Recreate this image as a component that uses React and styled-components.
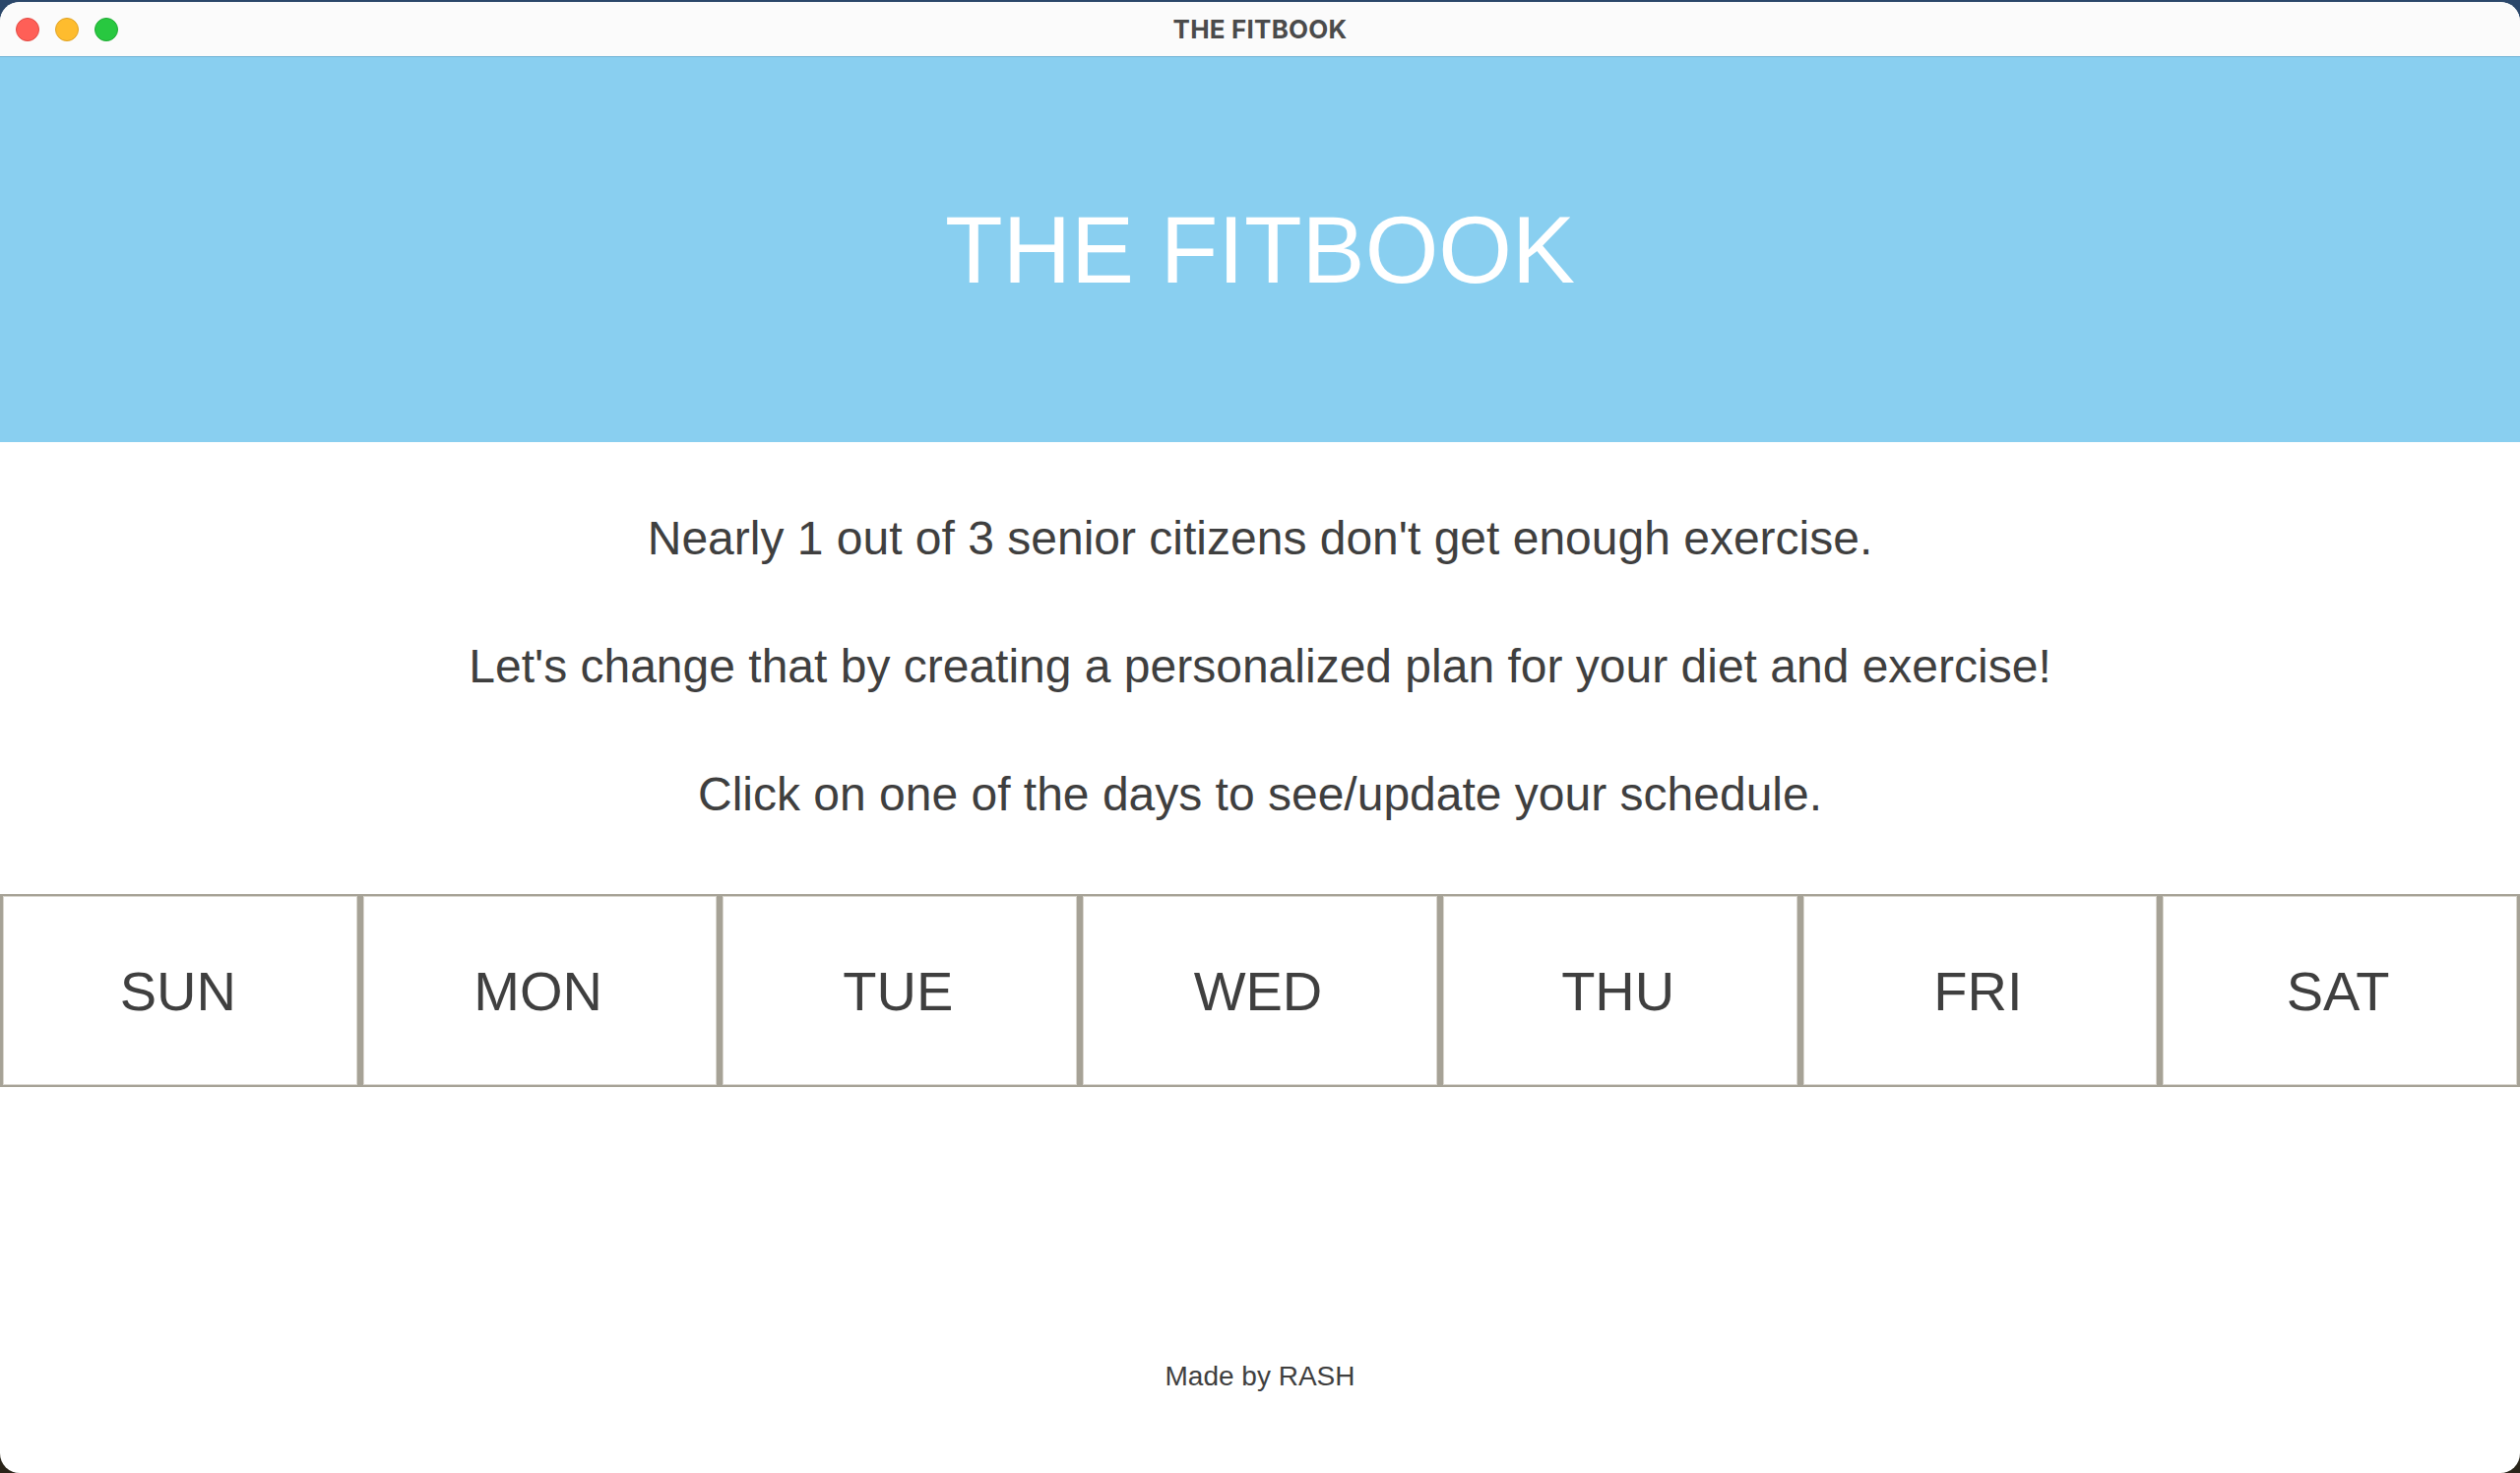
import React from "react";
import styled, { createGlobalStyle } from "styled-components";

const GlobalStyle = createGlobalStyle`
  html, body {
    margin: 0;
    padding: 0;
    height: 100%;
    background: linear-gradient(180deg, #2b476a 0%, #2b3a4c 50%, #2a2419 100%);
  }
  #root {
    height: 100%;
  }
  * {
    box-sizing: border-box;
  }
`;

const Window = styled.div`
  margin-top: 2px;
  height: calc(100vh - 2px);
  display: flex;
  flex-direction: column;
  background: #ffffff;
  border-radius: 20px;
  overflow: hidden;
  font-family: "Liberation Sans", Arial, Helvetica, sans-serif;
`;

const TitleBar = styled.div`
  height: 56px;
  flex: none;
  display: grid;
  grid-template-columns: 1fr auto 1fr;
  align-items: center;
  background: #fbfbfb;
  border-bottom: 1px solid #72b4d6;
`;

const Lights = styled.div`
  display: flex;
  gap: 16px;
  padding-left: 16px;
`;

const Light = styled.span`
  width: 24px;
  height: 24px;
  border-radius: 50%;
  background: ${(p) => p.$color};
  border: 1px solid ${(p) => p.$edge};
`;

const WindowTitle = styled.div`
  font-family: Inter, "Liberation Sans", sans-serif;
  font-weight: 700;
  font-size: 26px;
  color: #4b4b4b;
  letter-spacing: 0.2px;
`;

const Header = styled.header`
  height: 391px;
  flex: none;
  display: flex;
  align-items: center;
  justify-content: center;
  background: #89cff0;
`;

const Title = styled.h1`
  margin: 0;
  font-size: 96px;
  font-weight: 400;
  line-height: 1;
  color: #ffffff;
`;

const Intro = styled.section`
  padding-top: 33px;
  display: flex;
  flex-direction: column;
  align-items: center;
`;

const Line = styled.p`
  margin: 0;
  font-size: 48px;
  line-height: 130px;
  color: #3f3f3f;
  text-align: center;
`;

const Days = styled.nav`
  margin-top: 36px;
  display: grid;
  grid-template-columns: repeat(7, 1fr);
`;

const DayButton = styled.button`
  height: 196px;
  margin: 0;
  padding: 0 4px 0 0;
  background: #ffffff;
  border-style: solid;
  border-width: 2px 3px;
  border-color: #a6a296;
  box-shadow: inset 0 0 0 1px #dad7d0;
  font-family: "Liberation Sans", Arial, Helvetica, sans-serif;
  font-size: 56px;
  color: #3f3f3f;
  cursor: pointer;
`;

const Footer = styled.footer`
  margin-top: auto;
  padding-bottom: 82px;
  text-align: center;
  font-size: 28px;
  line-height: 32px;
  color: #3f3f3f;
`;

const days = ["SUN", "MON", "TUE", "WED", "THU", "FRI", "SAT"];

export default function App() {
  return (
    <>
      <GlobalStyle />
      <Window>
        <TitleBar>
          <Lights>
            <Light $color="#ff5f57" $edge="#e14942" />
            <Light $color="#febc2e" $edge="#dea123" />
            <Light $color="#28c840" $edge="#1eaa33" />
          </Lights>
          <WindowTitle>THE FITBOOK</WindowTitle>
          <div />
        </TitleBar>
        <Header>
          <Title>THE FITBOOK</Title>
        </Header>
        <Intro>
          <Line>Nearly 1 out of 3 senior citizens don't get enough exercise.</Line>
          <Line>Let's change that by creating a personalized plan for your diet and exercise!</Line>
          <Line>Click on one of the days to see/update your schedule.</Line>
        </Intro>
        <Days>
          {days.map((d) => (
            <DayButton key={d}>{d}</DayButton>
          ))}
        </Days>
        <Footer>Made by RASH</Footer>
      </Window>
    </>
  );
}
